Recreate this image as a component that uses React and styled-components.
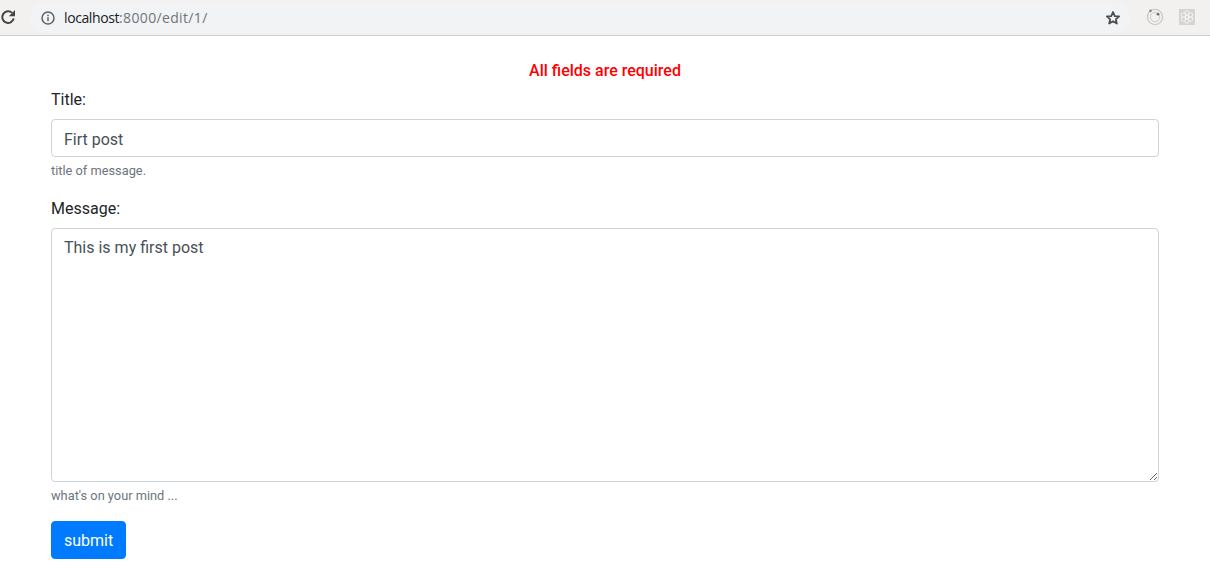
import React from "react";
import styled, { createGlobalStyle } from "styled-components";

const GlobalStyle = createGlobalStyle`
  html, body {
    margin: 0;
    padding: 0;
    height: 100%;
    overflow: hidden;
    background: #fff;
    font-family: Roboto, "Liberation Sans", sans-serif;
  }
`;

const BrowserBar = styled.div`
  box-sizing: border-box;
  height: 36px;
  display: flex;
  align-items: center;
  background: #f2f1f0;
  border-bottom: 1px solid #d2d0ce;
`;

const ReloadButton = styled.div`
  width: 30px;
  height: 35px;
  display: flex;
  align-items: center;
  svg {
    display: block;
    margin-bottom: 2px;
  }
`;

const Omnibox = styled.div`
  width: 1100px;
  height: 30px;
  display: flex;
  align-items: center;
  background: #f1f3f4;
  border-radius: 15px;
`;

const InfoIcon = styled.div`
  margin-left: 11px;
  width: 14px;
  height: 14px;
  svg {
    display: block;
  }
`;

const UrlText = styled.div`
  margin-left: 9px;
  font-family: "Open Sans", Roboto, sans-serif;
  font-size: 14px;
  letter-spacing: 0.35px;
  color: #70757a;
  flex: 1;
  span {
    color: #202124;
    letter-spacing: -0.4px;
  }
`;

const StarIcon = styled.div`
  margin-right: 9px;
  svg {
    display: block;
  }
`;

const Extensions = styled.div`
  display: flex;
  align-items: center;
  margin-left: 16px;
  margin-bottom: 1px;
  gap: 15px;
  svg {
    display: block;
  }
`;

const Page = styled.main`
  padding: 24px 51px 0;
  color: #212529;
`;

const Alert = styled.p`
  margin: 0;
  height: 22px;
  line-height: 22px;
  font-size: 16px;
  font-weight: 500;
  color: #ff0000;
  text-align: center;
`;

const Group = styled.div`
  margin-bottom: 16px;
`;

const Label = styled.label`
  display: block;
  padding-top: 1px;
  margin-top: ${(p) => p.$top || 0}px;
  margin-bottom: 7px;
  font-size: 16px;
  line-height: 24px;
`;

const TextInput = styled.input`
  display: block;
  box-sizing: border-box;
  width: 100%;
  height: 38px;
  padding: 7px 12px 5px;
  font: 400 16px/24px Roboto, sans-serif;
  color: #495057;
  background: #fff;
  border: 1px solid #ced4da;
  border-radius: 4px;
  outline: none;
`;

const TextArea = styled.textarea`
  display: block;
  box-sizing: border-box;
  width: 100%;
  height: 254px;
  padding: 7px 12px 5px;
  font: 400 16px/24px Roboto, sans-serif;
  color: #495057;
  background: #fff;
  border: 1px solid #ced4da;
  border-radius: 4px;
  outline: none;
`;

const Hint = styled.small`
  display: block;
  margin-top: 4px;
  font-size: 12.8px;
  line-height: 19px;
  color: #6c757d;
`;

const SubmitButton = styled.button`
  display: block;
  height: 38px;
  padding: 7px 12px 5px;
  font: 400 16px/24px Roboto, sans-serif;
  color: #fff;
  background: #007bff;
  border: 1px solid #007bff;
  border-radius: 4px;
`;

const App = () => (
  <>
    <GlobalStyle />
    <BrowserBar>
      <ReloadButton>
        <svg width="16" height="16" viewBox="0 0 16 16">
          <path
            d="M12.1 3.9A5.8 5.8 0 1 0 13.7 9.5"
            fill="none"
            stroke="#444"
            strokeWidth="2"
          />
          <path d="M15 1v6.2H8.8z" fill="#444" />
        </svg>
      </ReloadButton>
      <Omnibox>
        <InfoIcon>
          <svg width="14" height="14" viewBox="0 0 14 14">
            <circle cx="7" cy="7" r="6" fill="none" stroke="#5f6368" strokeWidth="1.5" />
            <rect x="6.25" y="6.2" width="1.5" height="4" fill="#5f6368" />
            <rect x="6.25" y="3.7" width="1.5" height="1.5" fill="#5f6368" />
          </svg>
        </InfoIcon>
        <UrlText>
          <span>localhost</span>:8000/edit/1/
        </UrlText>
        <StarIcon>
          <svg width="16" height="16" viewBox="0 0 16 16">
            <path
              d="M8 2l1.75 4.03 4.37.4-3.3 2.88.98 4.28L8 11.33l-3.8 2.26.98-4.28-3.3-2.88 4.37-.4z"
              fill="none"
              stroke="#4a4d51"
              strokeWidth="1.8"
              strokeLinejoin="round"
            />
          </svg>
        </StarIcon>
      </Omnibox>
      <Extensions>
        <svg width="18" height="18" viewBox="0 0 18 18">
          <circle cx="9" cy="9" r="7.6" fill="none" stroke="#c9c9c7" strokeWidth="1.4" />
          <circle cx="9" cy="9" r="4.6" fill="none" stroke="#d2d2d0" strokeWidth="1.2" />
          <circle cx="4.5" cy="2.8" r="1.4" fill="#8c8c8a" />
          <circle cx="12" cy="6.2" r="1.4" fill="#6e6e6c" />
        </svg>
        <svg width="16" height="16" viewBox="0 0 16 16">
          <rect width="16" height="16" fill="#d4d4d2" />
          <g fill="none" stroke="#f4f4f3" strokeWidth="1">
            <circle cx="8" cy="4" r="2.2" />
            <circle cx="8" cy="12" r="2.2" />
            <circle cx="4.4" cy="6" r="2.2" />
            <circle cx="11.6" cy="6" r="2.2" />
            <circle cx="4.4" cy="10" r="2.2" />
            <circle cx="11.6" cy="10" r="2.2" />
            <circle cx="8" cy="8" r="1.6" />
          </g>
        </svg>
      </Extensions>
    </BrowserBar>
    <Page>
      <Alert>All fields are required</Alert>
      <Group>
        <Label $top={5}>Title:</Label>
        <TextInput defaultValue="Firt post" />
        <Hint>title of message.</Hint>
      </Group>
      <Group>
        <Label>Message:</Label>
        <TextArea defaultValue="This is my first post" />
        <Hint>what's on your mind ...</Hint>
      </Group>
      <SubmitButton>submit</SubmitButton>
    </Page>
  </>
);

export default App;
